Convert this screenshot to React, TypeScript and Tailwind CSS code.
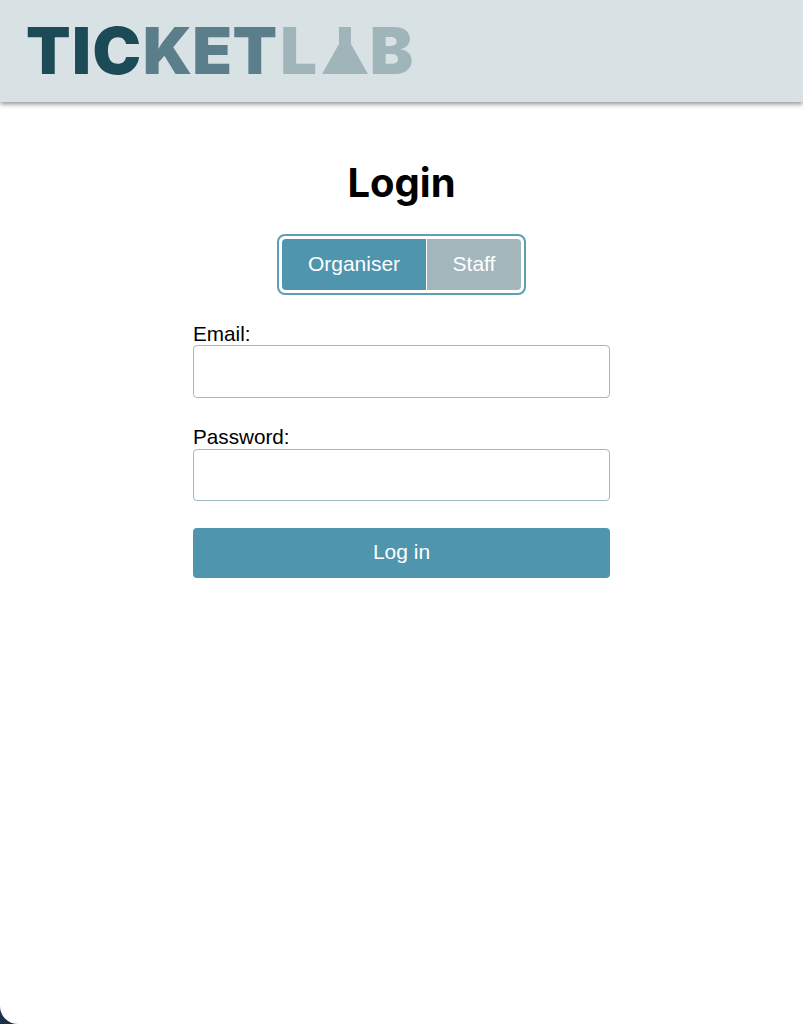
export default function App() {
  return (
    <div className="h-[1024px] w-[803px] overflow-hidden bg-[#1b3147]">
      <div className="flex h-full w-full flex-col items-center overflow-hidden rounded-bl-[18px] bg-white font-['Liberation_Sans',sans-serif]">
        <header className="flex h-[102px] w-full shrink-0 items-center bg-[#d8e1e4] pl-[26px] pb-[1px] shadow-[0_2px_5px_rgba(0,0,0,0.45)]">
          <div className="flex items-center font-['Inter',sans-serif] text-[65px] font-black leading-none tracking-[1.5px]">
            <span className="text-[#1d4a57]">TIC</span>
            <span className="tracking-[0.3px] text-[#5b7f8a]">KET</span>
            <span className="ml-[3px] text-[#a0b5ba]">L</span>
            <svg viewBox="0 0 46 47" className="ml-[3px] h-[47px] w-[46px] fill-[#a0b5ba]">
              <path d="M17 0H29V17L46 47H0L17 17Z" />
            </svg>
            <span className="ml-[2px] text-[#a0b5ba]">B</span>
          </div>
        </header>
        <h1 className="mt-[56px] font-['Inter',sans-serif] text-[40px] font-bold leading-[50px] text-black">Login</h1>
        <div className="mt-[26px] flex h-[61px] w-[249px] gap-[1px] rounded-lg border-2 border-[#5d9fb6] p-[3px] text-[21px] text-white">
          <button className="w-[144px] rounded-l-[4px] bg-[#4f95ae] pb-[2px]">Organiser</button>
          <button className="w-[94px] rounded-r-[4px] bg-[#a3b6bc] pb-[2px]">Staff</button>
        </div>
        <form className="mt-[27px] flex w-[417px] flex-col">
          <label className="text-[20.7px] leading-[23px] text-black">Email:</label>
          <input className="h-[53px] rounded border-[1.5px] border-[#9fbac2] bg-white" />
          <label className="mt-[27px] text-[20.7px] leading-[24px] text-black">Password:</label>
          <input className="h-[52px] rounded border-[1.5px] border-[#9fbac2] bg-white" />
          <button type="button" className="mt-[27px] h-[50px] rounded bg-[#4f95ae] pb-[2px] text-[21px] text-white">Log in</button>
        </form>
      </div>
    </div>
  );
}
